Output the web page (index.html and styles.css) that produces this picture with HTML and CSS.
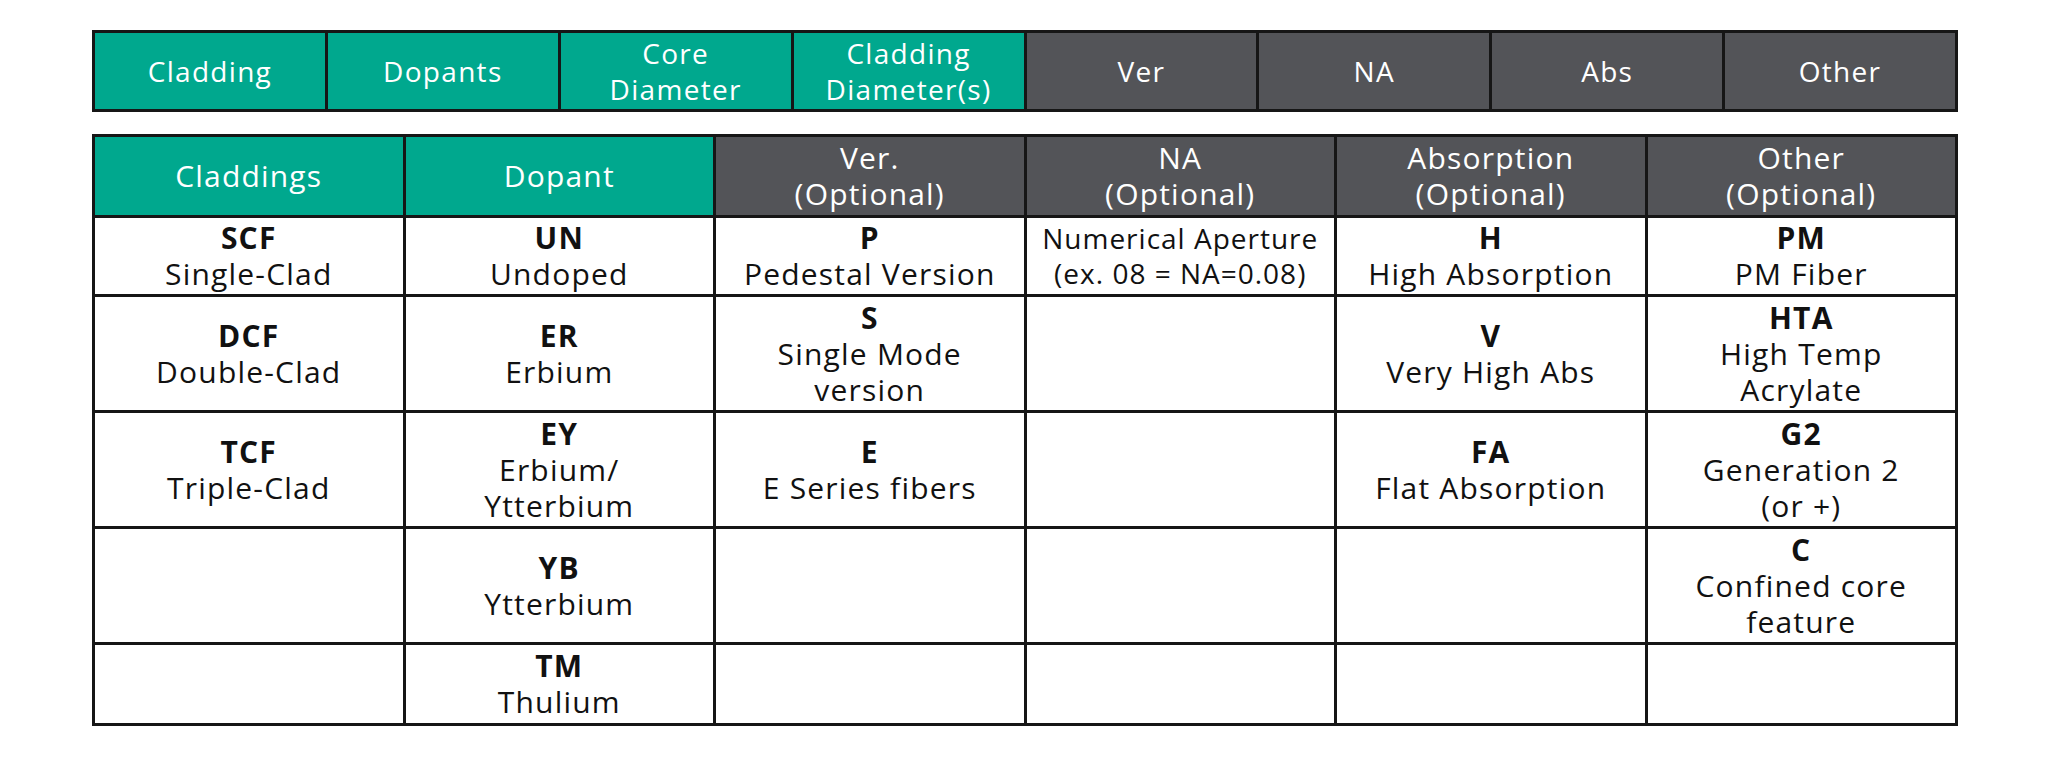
FILE: index.html
```html
<!DOCTYPE html>
<html lang="en">
<head>
<meta charset="utf-8">
<title>Fiber part number key</title>
<link rel="stylesheet" href="styles.css">
</head>
<body>
<main class="page">
  <table class="key key-top">
    <tr>
      <td class="teal">Cladding</td>
      <td class="teal">Dopants</td>
      <td class="teal two">Core<br>Diameter</td>
      <td class="teal two">Cladding<br>Diameter(s)</td>
      <td class="gray">Ver</td>
      <td class="gray">NA</td>
      <td class="gray">Abs</td>
      <td class="gray">Other</td>
    </tr>
  </table>

  <table class="key key-main">
    <thead>
      <tr class="head">
        <th class="teal">Claddings</th>
        <th class="teal">Dopant</th>
        <th class="gray">Ver.<br>(Optional)</th>
        <th class="gray">NA<br>(Optional)</th>
        <th class="gray">Absorption<br>(Optional)</th>
        <th class="gray">Other<br>(Optional)</th>
      </tr>
    </thead>
    <tbody>
      <tr class="r1">
        <td><b>SCF</b><br>Single-Clad</td>
        <td><b>UN</b><br>Undoped</td>
        <td><b>P</b><br>Pedestal Version</td>
        <td class="small">Numerical Aperture<br>(ex. 08 = NA=0.08)</td>
        <td><b>H</b><br>High Absorption</td>
        <td><b>PM</b><br>PM Fiber</td>
      </tr>
      <tr class="r3">
        <td><b>DCF</b><br>Double-Clad</td>
        <td><b>ER</b><br>Erbium</td>
        <td><b>S</b><br>Single Mode<br>version</td>
        <td></td>
        <td><b>V</b><br>Very High Abs</td>
        <td><b>HTA</b><br>High Temp<br>Acrylate</td>
      </tr>
      <tr class="r3">
        <td><b>TCF</b><br>Triple-Clad</td>
        <td><b>EY</b><br>Erbium/<br>Ytterbium</td>
        <td><b>E</b><br>E Series fibers</td>
        <td></td>
        <td><b>FA</b><br>Flat Absorption</td>
        <td><b>G2</b><br>Generation 2<br>(or +)</td>
      </tr>
      <tr class="r3">
        <td></td>
        <td><b>YB</b><br>Ytterbium</td>
        <td></td>
        <td></td>
        <td></td>
        <td><b>C</b><br>Confined core<br>feature</td>
      </tr>
      <tr class="r1 last">
        <td></td>
        <td><b>TM</b><br>Thulium</td>
        <td></td>
        <td></td>
        <td></td>
        <td></td>
      </tr>
    </tbody>
  </table>
</main>
</body>
</html>
```

FILE: styles.css
```css
html, body {
  margin: 0;
  padding: 0;
  background: #ffffff;
}

.page {
  padding: 30px 0 0 92px;
  font-family: "Open Sans", "Liberation Sans", sans-serif;
  color: #111111;
}

.key {
  border-collapse: collapse;
  table-layout: fixed;
  border: 3px solid #161616;
}

.key td,
.key th {
  border: 3px solid #161616;
  text-align: center;
  vertical-align: middle;
  padding: 0;
  font-size: 30px;
  line-height: 36px;
  letter-spacing: 1.2px;
  font-weight: 400;
  overflow: hidden;
  white-space: nowrap;
}

.key b {
  font-weight: 700;
}

.teal {
  background: #00a88e;
  color: #ffffff;
}

.gray {
  background: #535458;
  color: #ffffff;
}

.key-top {
  width: 1866px;
}

.key-top td {
  height: 76px;
  font-size: 28px;
  line-height: 36px;
  letter-spacing: 1.3px;
}

.key-main {
  width: 1866px;
  margin-top: 22px;
}

.key-main th {
  height: 78px;
}

.key-main .r1 td {
  height: 76px;
}

.key-main .r3 td {
  height: 113px;
}

.key-main .last td {
  height: 78px;
}

.key-main .small {
  font-size: 28px;
  line-height: 35px;
  letter-spacing: 1px;
}
```
